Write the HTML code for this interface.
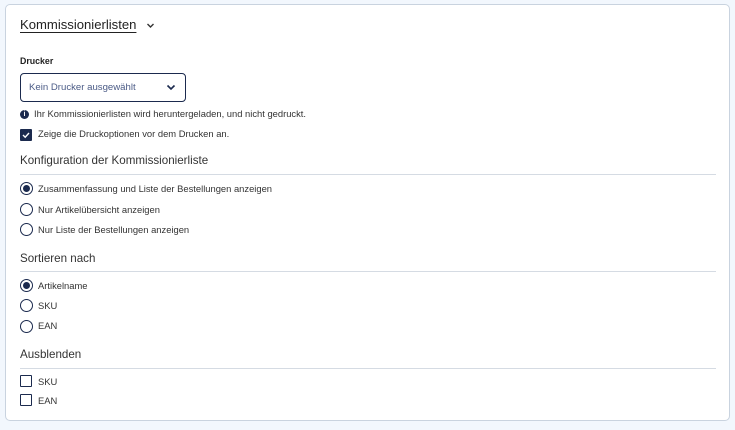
<!DOCTYPE html>
<html><head><meta charset="utf-8"><style>
*{margin:0;padding:0;box-sizing:border-box}
body{width:735px;height:430px;background:#f2f7fd;font-family:"Liberation Sans",sans-serif;color:#2a2f3a;position:relative;overflow:hidden}
.card{position:absolute;left:5px;top:4px;width:725px;height:417px;background:#fff;border:1px solid #c9d3df;border-radius:5px}
.a{position:absolute;white-space:nowrap}
.s{font-size:9.4px;color:#333}
.h{font-size:11.6px;color:#333}
.line{position:absolute;left:20px;width:696px;height:1px;background:#d5dbe3}
.r{position:absolute;left:20px;width:13px;height:13px;border:1px solid #1b2a4e;border-radius:50%}
.r.on::after{content:"";position:absolute;left:2px;top:2px;width:7px;height:7px;border-radius:50%;background:#1b2a4e}
.cb{position:absolute;left:20px;width:12px;height:12px;border:1.2px solid #1b2a4e;border-radius:1px}
</style></head><body>
<div class="card"></div>
<div class="a" style="left:20px;top:17px;font-size:13.1px;color:#222;text-decoration:underline;text-underline-offset:3px">Kommissionierlisten</div>
<svg class="a" style="left:146px;top:22px" width="9" height="7" viewBox="0 0 9 7"><path d="M1.5 2 L4.5 5 L7.5 2" stroke="#333" stroke-width="1.4" fill="none"/></svg>
<div class="a" style="left:20px;top:56px;font-size:8.8px;color:#222;font-weight:bold">Drucker</div>
<div class="a" style="left:20px;top:73px;width:166px;height:29px;border:1.3px solid #1b2a4e;border-radius:4px"></div>
<div class="a" style="left:29px;top:82px;font-size:9.6px;color:#4b5b86">Kein Drucker ausgewählt</div>
<svg class="a" style="left:166px;top:84px" width="10" height="7" viewBox="0 0 10 7"><path d="M1.5 1.5 L5 5 L8.5 1.5" stroke="#1b2a4e" stroke-width="1.6" fill="none"/></svg>
<div class="a" style="left:20px;top:110px;width:9px;height:9px;border-radius:50%;background:#1b2a4e;color:#fff;font-size:7px;font-weight:bold;text-align:center;line-height:9px">i</div>
<div class="a s" style="left:34px;top:108px">Ihr Kommissionierlisten wird heruntergeladen, und nicht gedruckt.</div>
<div class="a" style="left:20px;top:129px;width:12px;height:12px;background:#1b2a4e;border-radius:1px"></div>
<svg class="a" style="left:20px;top:129px" width="12" height="12" viewBox="0 0 12 12"><path d="M3 6 L5.2 8.2 L9 4" stroke="#fff" stroke-width="1.4" fill="none"/></svg>
<div class="a s" style="left:38px;top:128px">Zeige die Druckoptionen vor dem Drucken an.</div>
<div class="a h" style="left:20px;top:154px">Konfiguration der Kommissionierliste</div>
<div class="line" style="top:174px"></div>
<div class="r on" style="top:182px"></div><div class="a s" style="left:38px;top:183px">Zusammenfassung und Liste der Bestellungen anzeigen</div>
<div class="r" style="top:203px"></div><div class="a s" style="left:38px;top:204px">Nur Artikelübersicht anzeigen</div>
<div class="r" style="top:223px"></div><div class="a s" style="left:38px;top:224px">Nur Liste der Bestellungen anzeigen</div>
<div class="a h" style="left:20px;top:252px">Sortieren nach</div>
<div class="line" style="top:271px"></div>
<div class="r on" style="top:279px"></div><div class="a s" style="left:38px;top:280px">Artikelname</div>
<div class="r" style="top:299px"></div><div class="a s" style="left:38px;top:300px">SKU</div>
<div class="r" style="top:320px"></div><div class="a s" style="left:38px;top:320px">EAN</div>
<div class="a h" style="left:20px;top:348px">Ausblenden</div>
<div class="line" style="top:368px"></div>
<div class="cb" style="top:375px"></div><div class="a s" style="left:38px;top:376px">SKU</div>
<div class="cb" style="top:394px"></div><div class="a s" style="left:38px;top:395px">EAN</div>
</body></html>
